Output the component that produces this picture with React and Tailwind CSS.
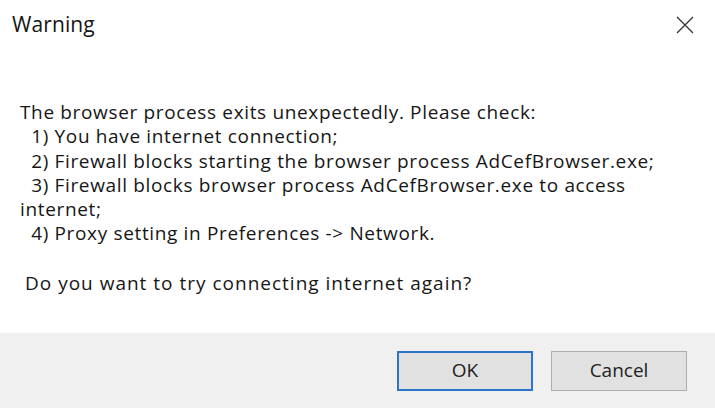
const lines = [
  "The browser process exits unexpectedly. Please check:",
  "  1) You have internet connection;",
  "  2) Firewall blocks starting the browser process AdCefBrowser.exe;",
  "  3) Firewall blocks browser process AdCefBrowser.exe to access",
  "internet;",
  "  4) Proxy setting in Preferences -> Network.",
];

const App = () => {
  return (
    <div className="w-[715px] h-[408px] bg-white flex flex-col text-[#161616] font-['Open_Sans',sans-serif] overflow-hidden">
      {/* title bar */}
      <div className="h-[50px] flex items-center justify-between pl-[12px] pr-[20px]">
        <span className="text-[21px] tracking-[0.1px]">Warning</span>
        <svg width="20" height="20" viewBox="0 0 20 20" className="text-[#333]">
          <path d="M2 2 L18 18 M18 2 L2 18" stroke="currentColor" strokeWidth="1.3" />
        </svg>
      </div>

      {/* message */}
      <div className="flex-1 pl-[20px] pt-[50px] text-[19px] leading-[24.3px] tracking-[0.65px]">
        {lines.map((line, i) => (
          <div key={i} className="whitespace-pre">
            {line}
          </div>
        ))}
        <div className="whitespace-pre mt-[25px] pl-[5px] tracking-[1px]">
          Do you want to try connecting internet again?
        </div>
      </div>

      {/* buttons */}
      <div className="h-[75px] bg-[#f0f0f0] flex items-center justify-end gap-[18px] pr-[28px]">
        <button className="w-[136px] h-[40px] bg-[#e1e1e1] border-2 border-[#2b74c8] text-[19px] text-[#222]">
          OK
        </button>
        <button className="w-[136px] h-[40px] bg-[#e1e1e1] border border-[#adadad] text-[19px] text-[#222]">
          Cancel
        </button>
      </div>
    </div>
  );
};

export default App;
